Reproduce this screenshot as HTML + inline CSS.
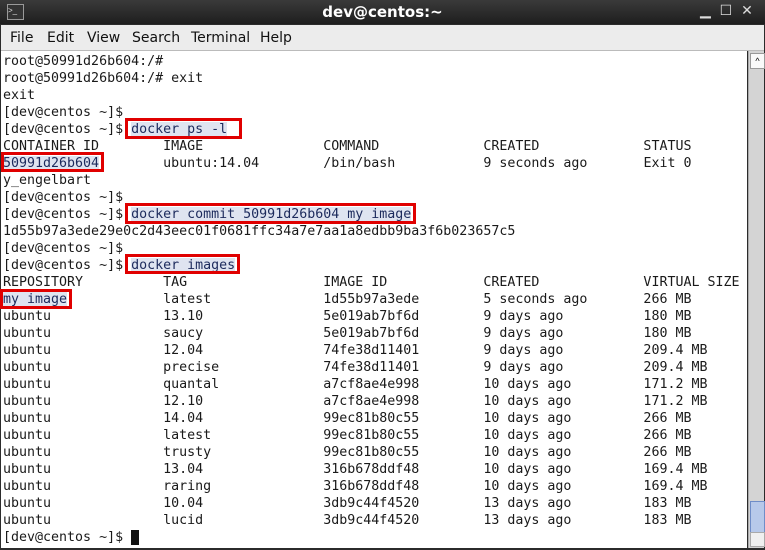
<!DOCTYPE html>
<html><head><style>
body{margin:0;width:765px;height:550px;overflow:hidden;background:#2b2b2b;position:relative;font-family:"Liberation Sans",sans-serif}
.title{position:absolute;left:0;top:0;width:765px;height:24px;background:linear-gradient(#3a3a3a,#1e1e1e);color:#fff;font-weight:bold;font-size:15px;text-align:center;line-height:24px;font-family:"DejaVu Sans",sans-serif}
.menu{position:absolute;left:1px;top:25px;width:763px;height:25px;background:#ececec;border-bottom:1px solid #bbb;font-family:"DejaVu Sans",sans-serif;font-size:14px;color:#111}
.menu span{position:absolute;top:5px}
.term{position:absolute;left:1px;top:51px;width:746px;height:497px;background:#fff}
pre{position:absolute;left:3px;top:53px;margin:0;font-family:"DejaVu Sans Mono",monospace;font-size:13.3px;line-height:17px;color:#1a1a1a}
.h{background:#dfe4f0;color:#1c2a5c}
.box{position:absolute;border:3px solid #e00000;box-sizing:border-box}
.sb{position:absolute;left:748px;top:51px;width:15px;height:497px;background:#d4d4d4;border-left:1px solid #aaa}
</style></head><body>
<div class="title">dev@centos:~</div>
<div style="position:absolute;left:7px;top:4px;width:15px;height:14px;border:1px solid #999;background:#333;color:#ddd;font-size:8px;line-height:12px">&gt;_</div>
<div style="position:absolute;left:700px;top:3px;color:#ddd;font-size:14px;font-family:'DejaVu Sans'">▁ &nbsp;☐ &nbsp;✕</div>
<div class="menu"><span style="left:9px">File</span><span style="left:46px">Edit</span><span style="left:86px">View</span><span style="left:131px">Search</span><span style="left:190px">Terminal</span><span style="left:259px">Help</span></div>
<div class="term"></div>
<div class="sb"><div style="position:absolute;left:1px;top:2px;width:13px;height:14px;background:#fafafa;border:1px solid #999;font-size:9px;text-align:center;line-height:14px">^</div><div style="position:absolute;left:1px;top:450px;width:13px;height:30px;background:#b7c9ea;border:1px solid #6f8dc8"></div><div style="position:absolute;left:1px;top:481px;width:13px;height:13px;background:#f0f0f0;border:1px solid #aaa"></div></div>
<pre>root@50991d26b604:/#
root@50991d26b604:/# exit
exit
[dev@centos ~]$
[dev@centos ~]$ <span class="h">docker ps -l</span>
CONTAINER ID        IMAGE               COMMAND             CREATED             STATUS
<span class="h">50991d26b604</span>        ubuntu:14.04        /bin/bash           9 seconds ago       Exit 0
y_engelbart
[dev@centos ~]$
[dev@centos ~]$ <span class="h">docker commit 50991d26b604 my image</span>
1d55b97a3ede29e0c2d43eec01f0681ffc34a7e7aa1a8edbb9ba3f6b023657c5
[dev@centos ~]$
[dev@centos ~]$ <span class="h">docker images</span>
REPOSITORY          TAG                 IMAGE ID            CREATED             VIRTUAL SIZE
<span class="h">my image</span>            latest              1d55b97a3ede        5 seconds ago       266 MB
ubuntu              13.10               5e019ab7bf6d        9 days ago          180 MB
ubuntu              saucy               5e019ab7bf6d        9 days ago          180 MB
ubuntu              12.04               74fe38d11401        9 days ago          209.4 MB
ubuntu              precise             74fe38d11401        9 days ago          209.4 MB
ubuntu              quantal             a7cf8ae4e998        10 days ago         171.2 MB
ubuntu              12.10               a7cf8ae4e998        10 days ago         171.2 MB
ubuntu              14.04               99ec81b80c55        10 days ago         266 MB
ubuntu              latest              99ec81b80c55        10 days ago         266 MB
ubuntu              trusty              99ec81b80c55        10 days ago         266 MB
ubuntu              13.04               316b678ddf48        10 days ago         169.4 MB
ubuntu              raring              316b678ddf48        10 days ago         169.4 MB
ubuntu              10.04               3db9c44f4520        13 days ago         183 MB
ubuntu              lucid               3db9c44f4520        13 days ago         183 MB
[dev@centos ~]$ <span style="background:#111">&nbsp;</span></pre>
<div class="box" style="left:125px;top:118px;width:117px;height:21px"></div>
<div class="box" style="left:1px;top:152px;width:103px;height:20px"></div>
<div class="box" style="left:125px;top:203px;width:291px;height:21px"></div>
<div class="box" style="left:125px;top:254px;width:115px;height:20px"></div>
<div class="box" style="left:0px;top:289px;width:72px;height:20px"></div>
</body></html>
